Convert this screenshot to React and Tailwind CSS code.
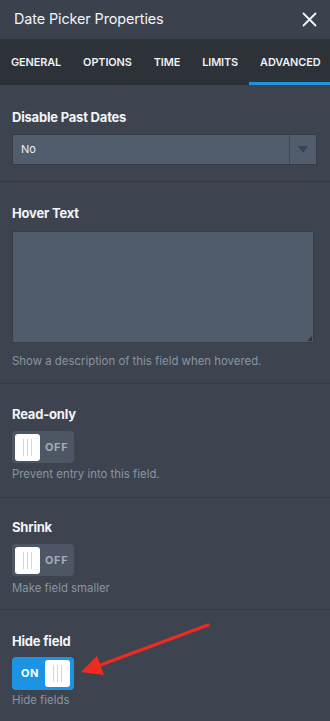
import React from "react";

const font = { fontFamily: "Inter, 'Noto Sans', sans-serif" };

function Knob() {
  return (
    <div className="w-[25px] h-[27px] bg-white rounded-[3px] flex items-center justify-center gap-[3px]">
      <div className="w-px h-[17px] bg-[#d3d7dc]" />
      <div className="w-px h-[17px] bg-[#d3d7dc]" />
      <div className="w-px h-[17px] bg-[#d3d7dc]" />
    </div>
  );
}

function Toggle({ on }) {
  if (on) {
    return (
      <div className="w-[62px] h-[33px] rounded-[4px] bg-[#1c94e3] flex items-center justify-between pl-[9px] pr-[4px]">
        <span className="text-[11px] font-bold text-white tracking-[0.5px] leading-none">ON</span>
        <Knob />
      </div>
    );
  }
  return (
    <div className="w-[62px] h-[32px] rounded-[4px] bg-[#4c5665] flex items-center pl-[3px]">
      <Knob />
      <span className="ml-[5px] text-[11px] font-bold text-[#a3abb6] tracking-[0.6px] leading-none">OFF</span>
    </div>
  );
}

function Label({ children, mb = "mb-[9px]" }) {
  return (
    <div className={"text-[13px] leading-[16px] font-bold tracking-[-0.2px] text-[#f2f4f7] " + mb}>{children}</div>
  );
}

function Desc({ children, className = "" }) {
  return <div className={"text-[11.4px] leading-[16px] text-[#8a94a2] " + className}>{children}</div>;
}

export default function App() {
  const tabs = ["GENERAL", "OPTIONS", "TIME", "LIMITS", "ADVANCED"];
  return (
    <div style={font} className="relative w-[330px] h-[721px] bg-[#3d4450] overflow-hidden">
      {/* Header */}
      <div className="h-[39px] bg-[#3b424e] flex items-center justify-between pl-[14px] pr-[13px]">
        <span className="text-[14.4px] text-[#f1f3f6] leading-none tracking-[-0.1px]">Date Picker Properties</span>
        <svg width="15" height="15" viewBox="0 0 15 15">
          <path d="M1.5 1.5 L13.5 13.5 M13.5 1.5 L1.5 13.5" stroke="#f4f5f7" strokeWidth="1.8" strokeLinecap="round" />
        </svg>
      </div>
      {/* Tabs */}
      <div className="h-[46px] bg-[#2d3239] flex">
        {tabs.map((t) => (
          <div
            key={t}
            className={
              "px-[11px] flex items-center text-[10.9px] font-semibold text-[#eef0f3] tracking-[-0.1px] border-b-[3px] pt-[4px] " +
              (t === "ADVANCED" ? "border-[#1c94e3] flex-1" : "border-transparent")
            }
          >
            {t}
          </div>
        ))}
      </div>

      {/* Section 1 */}
      <div className="pt-[24px] pb-[16px] px-[12px] border-b border-[#333a44]">
        <Label>Disable Past Dates</Label>
        <div className="h-[31px] w-[305px] flex border border-[#363d47] bg-[#515d6d]">
          <div className="flex-1 flex items-center pl-[8px] text-[11px] text-[#eef0f3]">No</div>
          <div className="w-[27px] border-l border-[#3f4856] flex items-center justify-center">
            <svg width="10" height="7" viewBox="0 0 10 7">
              <path d="M0 0 H10 L5 7 Z" fill="#3b4350" />
            </svg>
          </div>
        </div>
      </div>

      {/* Section 2 */}
      <div className="pt-[23px] pb-[14px] px-[12px] border-b border-[#333a44]">
        <Label mb="mb-[10px]">Hover Text</Label>
        <div className="relative h-[112px] w-[302px] border border-[#363d47] bg-[#505c6b]">
          <svg className="absolute right-[1px] bottom-[1px]" width="5" height="5" viewBox="0 0 5 5">
            <path d="M5 0 V5 H0 Z" fill="#2f353e" />
          </svg>
        </div>
        <Desc className="mt-[10px]">Show a description of this field when hovered.</Desc>
      </div>

      {/* Read-only */}
      <div className="pt-[22px] pb-[15px] px-[12px] border-b border-[#333a44]">
        <Label>Read-only</Label>
        <Toggle />
        <Desc className="mt-[3px]">Prevent entry into this field.</Desc>
      </div>

      {/* Shrink */}
      <div className="pt-[21px] pb-[13px] px-[12px] border-b border-[#333a44]">
        <Label>Shrink</Label>
        <Toggle />
        <Desc className="mt-[4px]">Make field smaller</Desc>
      </div>

      {/* Hide field */}
      <div className="pt-[23px] pb-[14px] px-[12px]">
        <Label mb="mb-[8px]">Hide field</Label>
        <Toggle on />
        <Desc className="mt-[2px]">Hide fields</Desc>
      </div>

      {/* Red arrow annotation */}
      <svg className="absolute left-0 top-0 pointer-events-none" width="330" height="721" viewBox="0 0 330 721">
        <line x1="208" y1="625" x2="95" y2="667" stroke="#f02a1f" strokeWidth="3.2" strokeLinecap="round" />
        <path d="M81 672 L97 656 L104 675 Z" fill="#f02a1f" />
      </svg>
    </div>
  );
}
